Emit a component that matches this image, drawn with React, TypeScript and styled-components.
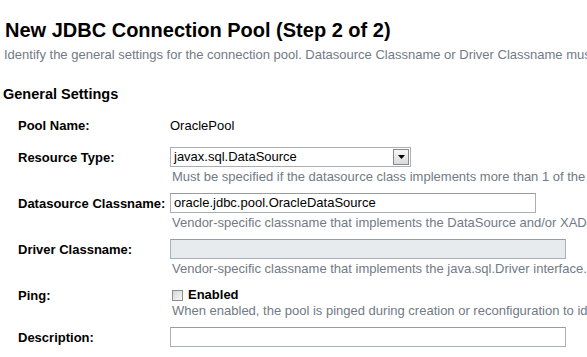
import React from "react";
import styled, { createGlobalStyle } from "styled-components";

const Global = createGlobalStyle`
  html, body {
    margin: 0;
    padding: 0;
    background: #fff;
    overflow: hidden;
  }
  body {
    font-family: "Liberation Sans", Arial, sans-serif;
    color: #000;
  }
`;

const Page = styled.div`
  width: 587px;
  height: 357px;
  overflow: hidden;
  padding: 18px 0 0 5px;
  box-sizing: border-box;
  white-space: nowrap;
`;

const Title = styled.h1`
  margin: 0;
  font-size: 20px;
  font-weight: bold;
  line-height: 24px;
`;

const Intro = styled.div`
  margin: 5px 0 0 -1px;
  font-size: 13px;
  line-height: 15px;
  color: #717a85;
`;

const SectionTitle = styled.h2`
  margin: 24px 0 0 -2px;
  font-size: 14.5px;
  font-weight: bold;
  line-height: 17px;
`;

const Form = styled.div`
  display: grid;
  grid-template-columns: 152px auto;
  margin: 15px 0 0 13px;
`;

const Label = styled.div<{ $gap?: number }>`
  font-size: 13px;
  font-weight: bold;
  line-height: 15px;
  padding-top: ${(p) => p.$gap ?? 0}px;
`;

const Field = styled.div`
  display: flex;
  flex-direction: column;
  align-items: flex-start;
  padding-bottom: 9px;
`;

const Value = styled.div`
  font-size: 13px;
  line-height: 15px;
  padding-bottom: 5px;
`;

const Hint = styled.div<{ $tight?: boolean }>`
  font-size: 13px;
  line-height: 15px;
  color: #717a85;
  margin-top: ${(p) => (p.$tight ? 0 : 2)}px;
  padding-left: 2px;
`;

const TextBox = styled.div<{ $w: number; $disabled?: boolean }>`
  width: ${(p) => p.$w}px;
  height: 20px;
  box-sizing: border-box;
  border: 1px solid #a9afb5;
  border-top-color: #979da3;
  background: ${(p) => (p.$disabled ? "#e8ebee" : "#fff")};
  font-size: 13px;
  line-height: 18px;
  padding-left: 3px;
`;

const Select = styled.div`
  width: 241px;
  height: 20px;
  box-sizing: border-box;
  border: 1px solid #a9afb5;
  display: flex;
  align-items: stretch;
  font-size: 13px;
  background: #fff;
`;

const SelectText = styled.div`
  flex: 1;
  line-height: 18px;
  padding-left: 3px;
`;

const Arrow = styled.div`
  width: 16px;
  margin: 1px;
  box-sizing: border-box;
  border: 1px solid #888;
  background: linear-gradient(#f7f7f7, #dadada);
  display: flex;
  align-items: center;
  justify-content: center;
`;

const CheckRow = styled.div`
  display: flex;
  align-items: center;
  gap: 5px;
  font-size: 13px;
  font-weight: bold;
  line-height: 16px;
  padding: 2px 0 0 2px;
`;

const Box = styled.span`
  width: 11px;
  height: 11px;
  box-sizing: border-box;
  border: 1px solid #8c8c8c;
  background: linear-gradient(135deg, #d6d6d6, #f7f7f7);
`;

export default function App() {
  return (
    <Page>
      <Global />
      <Title>New JDBC Connection Pool (Step 2 of 2)</Title>
      <Intro>
        Identify the general settings for the connection pool. Datasource Classname or Driver Classname must
        be specified.
      </Intro>
      <SectionTitle>General Settings</SectionTitle>
      <Form>
        <Label>Pool Name:</Label>
        <Field>
          <Value>OraclePool</Value>
        </Field>

        <Label $gap={3}>Resource Type:</Label>
        <Field>
          <Select>
            <SelectText>javax.sql.DataSource</SelectText>
            <Arrow>
              <svg width="7" height="4" viewBox="0 0 7 4">
                <path d="M0 0h7L3.5 4z" fill="#000" />
              </svg>
            </Arrow>
          </Select>
          <Hint>Must be specified if the datasource class implements more than 1 of the interfaces.</Hint>
        </Field>

        <Label $gap={3}>Datasource Classname:</Label>
        <Field>
          <TextBox $w={366}>oracle.jdbc.pool.OracleDataSource</TextBox>
          <Hint>Vendor-specific classname that implements the DataSource and/or XADataSource APIs</Hint>
        </Field>

        <Label $gap={3}>Driver Classname:</Label>
        <Field>
          <TextBox $w={396} $disabled />
          <Hint>Vendor-specific classname that implements the java.sql.Driver interface.</Hint>
        </Field>

        <Label $gap={3}>Ping:</Label>
        <Field>
          <CheckRow>
            <Box />
            Enabled
          </CheckRow>
          <Hint $tight>
            When enabled, the pool is pinged during creation or reconfiguration to identify and warn of any erroneous
            values.
          </Hint>
        </Field>

        <Label $gap={3}>Description:</Label>
        <Field>
          <TextBox $w={396} />
        </Field>
      </Form>
    </Page>
  );
}
